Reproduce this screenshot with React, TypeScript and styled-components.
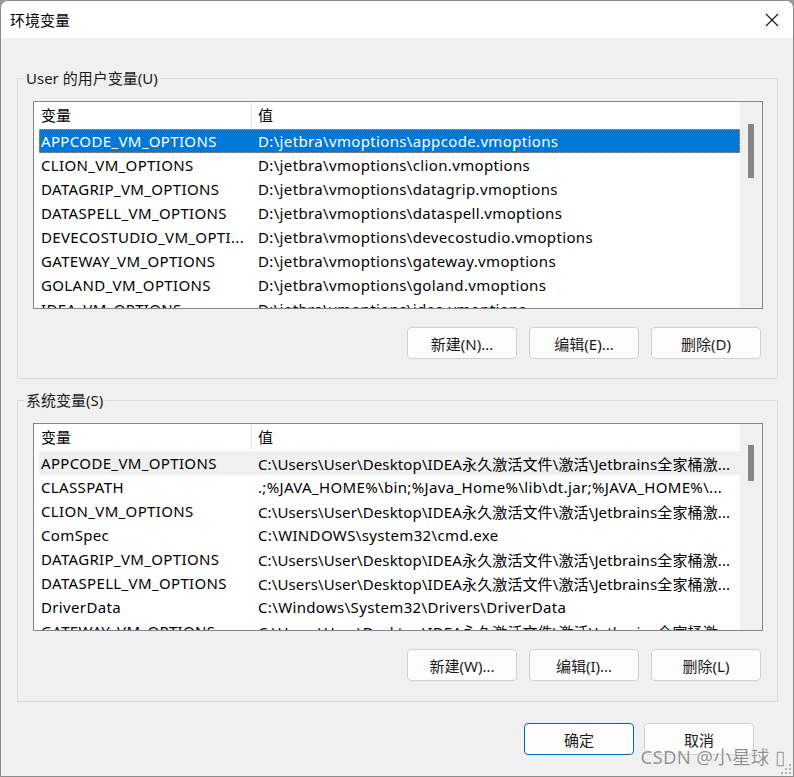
import styled, { createGlobalStyle } from 'styled-components';

const GlobalStyle = createGlobalStyle`
  html, body {
    margin: 0;
    padding: 0;
    background: #9a9a9a;
  }
  body {
    font-family: 'Noto Sans', 'Noto Sans CJK SC', sans-serif;
    font-size: 15px;
    color: #000;
  }
  * {
    box-sizing: border-box;
  }
`;

const Window = styled.div`
  position: relative;
  width: 794px;
  height: 777px;
  border: 1px solid #8c8c8c;
  border-radius: 8px 8px 0 0;
  background: #f0f0f0;
  overflow: hidden;
  display: flex;
  flex-direction: column;
`;

const TitleBar = styled.div`
  height: 37px;
  flex-shrink: 0;
  background: #fff;
  display: flex;
  align-items: center;
  justify-content: space-between;
  padding: 0 13px 0 9px;
`;

const Title = styled.span`
  font-size: 15px;
  line-height: 20px;
  padding-top: 1px;
`;

const CloseButton = styled.button`
  width: 16px;
  height: 16px;
  padding: 0;
  border: none;
  background: none;
  display: flex;
  align-items: center;
  justify-content: center;
`;

const Body = styled.div`
  flex: 1;
  padding: 30px 15px 0 16px;
  display: flex;
  flex-direction: column;
`;

const Group = styled.fieldset<{ $gap?: number }>`
  margin: ${(p) => p.$gap ?? 0}px 0 0;
  padding: 0 14px ${(p) => (p.$gap ? 20 : 19)}px 15px;
  border: 1px solid #dcdcdc;
  min-width: 0;
`;

const Legend = styled.legend`
  margin-left: -9px;
  padding: 0 2px;
  font-size: 15px;
  line-height: 20px;
  color: #1a1a1a;
`;

const ListBox = styled.div`
  margin-top: 13px;
  height: 208px;
  border: 1px solid #828790;
  background: #fff;
  display: flex;
  overflow: hidden;
`;

const ListBody = styled.div`
  flex: 1;
  min-width: 0;
  overflow: hidden;
`;

const HeaderRow = styled.div`
  height: 26px;
  display: flex;
  align-items: stretch;
  margin-bottom: 1px;
`;

const HeaderCell = styled.div<{ $first?: boolean }>`
  flex: ${(p) => (p.$first ? '0 0 218px' : '1')};
  padding-left: ${(p) => (p.$first ? '7px' : '6px')};
  border-right: ${(p) => (p.$first ? '1px solid #e5e5e5' : 'none')};
  display: flex;
  align-items: center;
  line-height: 20px;
  white-space: nowrap;
`;

const Row = styled.div<{ $state?: 'focus' | 'inactive' }>`
  height: 24px;
  margin-left: 5px;
  display: flex;
  align-items: center;
  white-space: nowrap;
  background: ${(p) =>
    p.$state === 'focus' ? '#0078d7' : p.$state === 'inactive' ? '#f0f0f0' : 'transparent'};
  color: ${(p) => (p.$state === 'focus' ? '#fff' : '#000')};
  outline: ${(p) => (p.$state === 'focus' ? '1px dotted #ff8728' : 'none')};
  outline-offset: -1px;
`;

const NameCell = styled.div`
  flex: 0 0 213px;
  padding-left: 2px;
  letter-spacing: 0.35px;
  overflow: hidden;
`;

const ValueCell = styled.div<{ $cjk?: boolean }>`
  flex: 1;
  padding-left: 6px;
  letter-spacing: ${(p) => (p.$cjk ? '0.12px' : '0.35px')};
  overflow: hidden;
`;

const ScrollTrack = styled.div`
  flex: 0 0 22px;
  background: #f0f0f0;
  position: relative;
`;

const ScrollThumb = styled.div`
  position: absolute;
  left: 8px;
  width: 6px;
  background: #858585;
`;

const ButtonRow = styled.div<{ $mt: number; $pr: number; $gap: number }>`
  display: flex;
  justify-content: flex-end;
  gap: ${(p) => p.$gap}px;
  margin-top: ${(p) => p.$mt}px;
  padding-right: ${(p) => p.$pr}px;
`;

const Button = styled.button<{ $primary?: boolean }>`
  width: 110px;
  height: 32px;
  border-radius: 4px;
  border: 1px solid ${(p) => (p.$primary ? '#0067c0' : '#d0d0d0')};
  background: #fdfdfd;
  font-family: inherit;
  font-size: 15px;
  color: #1b1b1b;
  padding: 0;
`;

const Watermark = styled.div`
  position: absolute;
  right: 8px;
  bottom: 8px;
  font-size: 18.5px;
  line-height: 22px;
  color: rgba(120, 120, 120, 0.82);
  text-shadow: 0 0 1px #fff, 0 0 2px #fff;
  letter-spacing: 0.3px;
`;

const Grip = styled.svg`
  position: absolute;
  right: 1px;
  bottom: 1px;
`;

type Item = { name: string; value: string };

const userVars: Item[] = [
  { name: 'APPCODE_VM_OPTIONS', value: 'D:\\jetbra\\vmoptions\\appcode.vmoptions' },
  { name: 'CLION_VM_OPTIONS', value: 'D:\\jetbra\\vmoptions\\clion.vmoptions' },
  { name: 'DATAGRIP_VM_OPTIONS', value: 'D:\\jetbra\\vmoptions\\datagrip.vmoptions' },
  { name: 'DATASPELL_VM_OPTIONS', value: 'D:\\jetbra\\vmoptions\\dataspell.vmoptions' },
  { name: 'DEVECOSTUDIO_VM_OPTI...', value: 'D:\\jetbra\\vmoptions\\devecostudio.vmoptions' },
  { name: 'GATEWAY_VM_OPTIONS', value: 'D:\\jetbra\\vmoptions\\gateway.vmoptions' },
  { name: 'GOLAND_VM_OPTIONS', value: 'D:\\jetbra\\vmoptions\\goland.vmoptions' },
  { name: 'IDEA_VM_OPTIONS', value: 'D:\\jetbra\\vmoptions\\idea.vmoptions' },
];

const jb = 'C:\\Users\\User\\Desktop\\IDEA永久激活文件\\激活\\Jetbrains全家桶激...';

const sysVars: Item[] = [
  { name: 'APPCODE_VM_OPTIONS', value: jb },
  { name: 'CLASSPATH', value: '.;%JAVA_HOME%\\bin;%Java_Home%\\lib\\dt.jar;%JAVA_HOME%\\...' },
  { name: 'CLION_VM_OPTIONS', value: jb },
  { name: 'ComSpec', value: 'C:\\WINDOWS\\system32\\cmd.exe' },
  { name: 'DATAGRIP_VM_OPTIONS', value: jb },
  { name: 'DATASPELL_VM_OPTIONS', value: jb },
  { name: 'DriverData', value: 'C:\\Windows\\System32\\Drivers\\DriverData' },
  { name: 'GATEWAY_VM_OPTIONS', value: jb },
];

const hasCjk = (s: string) => /[\u4e00-\u9fff]/.test(s);

function VarList({
  items,
  state,
  thumbTop,
  thumbHeight,
}: {
  items: Item[];
  state: 'focus' | 'inactive';
  thumbTop: number;
  thumbHeight: number;
}) {
  return (
    <ListBox>
      <ListBody>
        <HeaderRow>
          <HeaderCell $first>变量</HeaderCell>
          <HeaderCell>值</HeaderCell>
        </HeaderRow>
        {items.map((it, i) => (
          <Row key={it.name} $state={i === 0 ? state : undefined}>
            <NameCell>{it.name}</NameCell>
            <ValueCell $cjk={hasCjk(it.value)}>{it.value}</ValueCell>
          </Row>
        ))}
      </ListBody>
      <ScrollTrack>
        <ScrollThumb style={{ top: thumbTop, height: thumbHeight }} />
      </ScrollTrack>
    </ListBox>
  );
}

export default function App() {
  return (
    <>
      <GlobalStyle />
      <Window>
        <TitleBar>
          <Title>环境变量</Title>
          <CloseButton aria-label="关闭">
            <svg width="14" height="14" viewBox="0 0 14 14">
              <path d="M1 1 L13 13 M13 1 L1 13" stroke="#1a1a1a" strokeWidth="1.1" fill="none" />
            </svg>
          </CloseButton>
        </TitleBar>
        <Body>
          <Group>
            <Legend>User 的用户变量(U)</Legend>
            <VarList items={userVars} state="focus" thumbTop={22} thumbHeight={54} />
            <ButtonRow $mt={18} $pr={2} $gap={12}>
              <Button>新建(N)...</Button>
              <Button>编辑(E)...</Button>
              <Button>删除(D)</Button>
            </ButtonRow>
          </Group>
          <Group $gap={11}>
            <Legend>系统变量(S)</Legend>
            <VarList items={sysVars} state="inactive" thumbTop={21} thumbHeight={36} />
            <ButtonRow $mt={18} $pr={2} $gap={12}>
              <Button>新建(W)...</Button>
              <Button>编辑(I)...</Button>
              <Button>删除(L)</Button>
            </ButtonRow>
          </Group>
          <ButtonRow $mt={21} $pr={24} $gap={10}>
            <Button $primary>确定</Button>
            <Button>取消</Button>
          </ButtonRow>
        </Body>
        <Watermark>CSDN @小星球 ▯</Watermark>
        <Grip width="12" height="12" viewBox="0 0 12 12">
          {[
            [9, 1],
            [9, 5],
            [5, 5],
            [9, 9],
            [5, 9],
            [1, 9],
          ].map(([x, y]) => (
            <rect key={`${x}-${y}`} x={x} y={y} width="2" height="2" fill="#b5b5b5" />
          ))}
        </Grip>
      </Window>
    </>
  );
}
